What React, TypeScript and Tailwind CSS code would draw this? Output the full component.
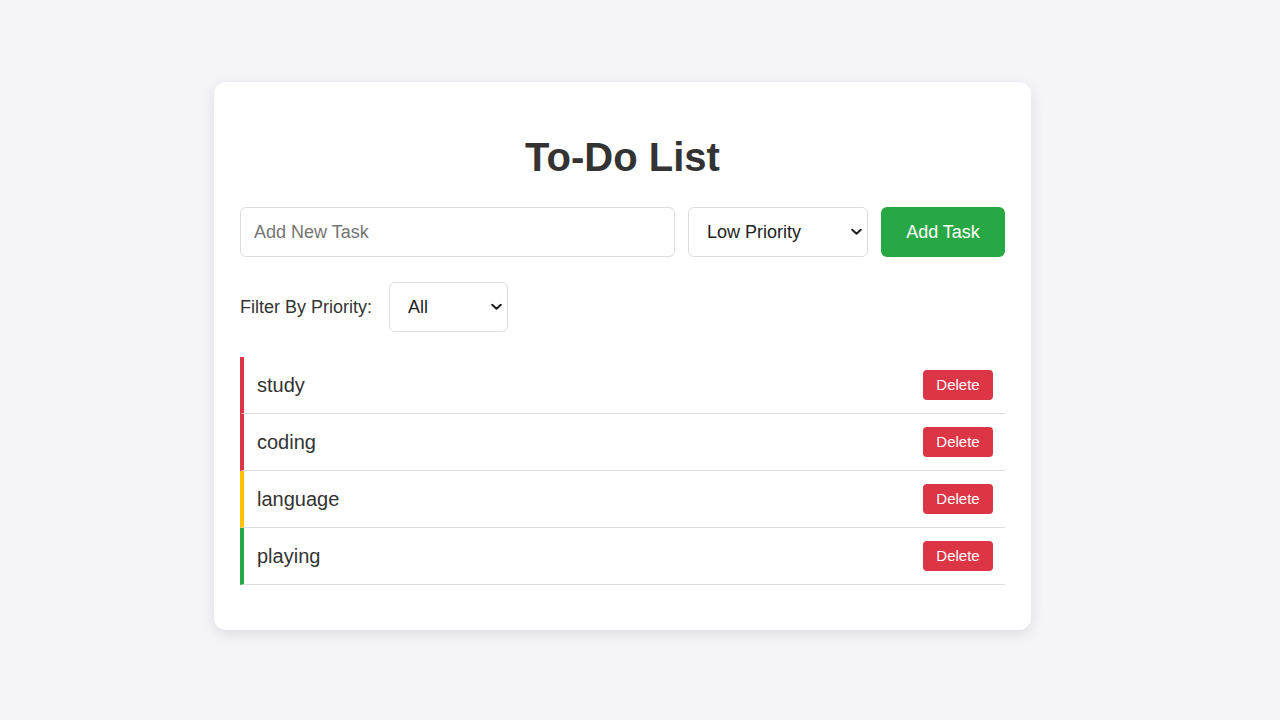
import React, { useState } from 'react';

type Priority = 'high' | 'medium' | 'low';

interface Task {
  id: number;
  text: string;
  priority: Priority;
}

const borderByPriority: Record<Priority, string> = {
  high: 'border-l-[#dc3545]',
  medium: 'border-l-[#ffc107]',
  low: 'border-l-[#28a745]',
};

const initialTasks: Task[] = [
  { id: 1, text: 'study', priority: 'high' },
  { id: 2, text: 'coding', priority: 'high' },
  { id: 3, text: 'language', priority: 'medium' },
  { id: 4, text: 'playing', priority: 'low' },
];

const Chevron: React.FC = () => (
  <svg
    className="pointer-events-none absolute top-1/2 right-[6px] -translate-y-1/2"
    width="11"
    height="7"
    viewBox="0 0 11 7"
    fill="none"
  >
    <path d="M1.2 1.2 L5.5 5.3 L9.8 1.2" stroke="#222" strokeWidth="2" strokeLinecap="round" strokeLinejoin="round" />
  </svg>
);

const App: React.FC = () => {
  const [tasks, setTasks] = useState<Task[]>(initialTasks);
  const [text, setText] = useState('');
  const [priority, setPriority] = useState<Priority>('low');
  const [filter, setFilter] = useState<'all' | Priority>('all');

  const addTask = () => {
    if (!text.trim()) return;
    setTasks([...tasks, { id: Date.now(), text: text.trim(), priority }]);
    setText('');
  };

  const shown = filter === 'all' ? tasks : tasks.filter((t) => t.priority === filter);

  return (
    <div className="min-h-screen bg-[#f4f4f9] pt-[82px] pb-10 font-['Liberation_Sans',Arial,sans-serif] text-[#333]">
      <div className="ml-[214px] w-[817px] rounded-[12px] bg-white px-[26px] pt-[52px] pb-[45px] shadow-[0_4px_14px_rgba(0,0,0,0.1)]">
        {/* Title */}
        <h1 className="text-center text-[40px] leading-[46px] font-bold text-[#333]">To-Do List</h1>

        {/* Add task row */}
        <div className="mt-[27px] flex items-center gap-[13px]">
          <input
            type="text"
            value={text}
            onChange={(e) => setText(e.target.value)}
            placeholder="Add New Task"
            className="h-[50px] flex-1 rounded-[6px] border border-[#ddd] px-[13px] text-[18px] outline-none placeholder:text-[#757575]"
          />
          <div className="relative w-[180px]">
            <select
              value={priority}
              onChange={(e) => setPriority(e.target.value as Priority)}
              className="h-[50px] w-full appearance-none rounded-[6px] border border-[#ddd] bg-white pr-[24px] pl-[18px] text-[18px] text-[#222] outline-none"
            >
              <option value="low">Low Priority</option>
              <option value="medium">Medium Priority</option>
              <option value="high">High Priority</option>
            </select>
            <Chevron />
          </div>
          <button
            onClick={addTask}
            className="h-[50px] w-[124px] rounded-[6px] bg-[#28a745] text-[18px] text-white"
          >
            Add Task
          </button>
        </div>

        {/* Filter row */}
        <div className="mt-[25px] flex items-center">
          <label className="text-[18px] text-[#333]">Filter By Priority:</label>
          <div className="relative ml-[17px] w-[119px]">
            <select
              value={filter}
              onChange={(e) => setFilter(e.target.value as 'all' | Priority)}
              className="h-[50px] w-full appearance-none rounded-[6px] border border-[#ddd] bg-white pr-[24px] pl-[18px] text-[18px] text-[#222] outline-none"
            >
              <option value="all">All</option>
              <option value="high">High</option>
              <option value="medium">Medium</option>
              <option value="low">Low</option>
            </select>
            <Chevron />
          </div>
        </div>

        {/* Task list */}
        <ul className="mt-[25px]">
          {shown.map((task) => (
            <li
              key={task.id}
              className={`flex items-center justify-between border-b border-l-[4px] border-b-[#ddd] py-[13px] pr-[12px] pl-[13px] ${borderByPriority[task.priority]}`}
            >
              <span className="text-[20px] text-[#333]">{task.text}</span>
              <button
                onClick={() => setTasks(tasks.filter((t) => t.id !== task.id))}
                className="h-[30px] w-[70px] rounded-[4px] bg-[#dc3545] text-[15px] text-white"
              >
                Delete
              </button>
            </li>
          ))}
        </ul>
      </div>
    </div>
  );
};

export default App;
